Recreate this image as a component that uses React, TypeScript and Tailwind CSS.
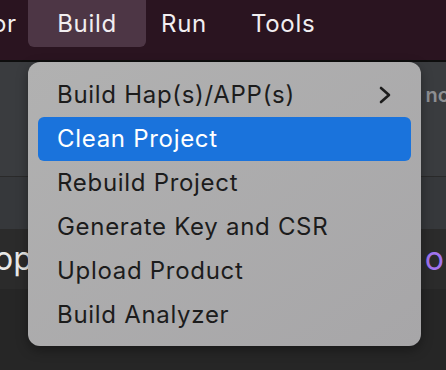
import React from 'react'

const items = [
  { label: 'Build Hap(s)/APP(s)', submenu: true },
  { label: 'Clean Project', active: true },
  { label: 'Rebuild Project' },
  { label: 'Generate Key and CSR' },
  { label: 'Upload Product' },
  { label: 'Build Analyzer' },
]

function Chevron() {
  return (
    <svg width="12" height="18" viewBox="0 0 12 18" fill="none">
      <path d="M2 2l8 7-8 7" stroke="#1c1c1c" strokeWidth="2.6" strokeLinecap="round" strokeLinejoin="round" />
    </svg>
  )
}

export default function App() {
  return (
    <div
      className="relative w-[446px] h-[370px] overflow-hidden bg-[#262626] text-[24px] tracking-[0.7px]"
      style={{ fontFamily: 'Inter, "Open Sans", "Liberation Sans", sans-serif' }}
    >
      {/* Menu bar */}
      <div className="h-[60px] bg-[#2a1420] flex items-start text-[#f1eef0]">
        <span className="h-[47px] flex items-center -ml-[8px] w-[36px]">or</span>
        <span className="h-[47px] w-[118px] flex items-center justify-center rounded-b-[6px] bg-[#4d3645]">Build</span>
        <span className="h-[47px] flex items-center ml-[15px]">Run</span>
        <span className="h-[47px] flex items-center ml-[44px]">Tools</span>
      </div>
      <div className="h-[2px] bg-[#0e0e0e]" />

      {/* Background window content */}
      <div className="h-[115px] bg-[#3a3c3f] border-b border-[#2a2a2a] relative">
        <span className="absolute right-[-4px] top-[18px] text-[20px] font-semibold text-[#8e8f92] tracking-normal">no</span>
      </div>
      <div className="h-[52px] bg-[#36383b]" />
      <div className="h-[60px] bg-[#2b2b2b] flex items-center justify-between text-[32px] tracking-normal">
        <span className="text-[#e8e8e8] -ml-[6px]">op</span>
        <span className="text-[#a274ef] mr-[2px]">o</span>
      </div>

      {/* Dropdown */}
      <div className="absolute left-[28px] top-[62px] w-[393px] h-[284px] rounded-[12px] bg-gradient-to-br from-[#b1b1b1] to-[#a7a6a8] px-[10px] pt-[11px] shadow-[0_4px_12px_rgba(0,0,0,0.35)]">
        {items.map((item) => (
          <div
            key={item.label}
            className={
              'h-[44px] flex items-center justify-between pl-[19px] pr-[20px] rounded-[6px] ' +
              (item.active ? 'bg-[#1a73dc] text-white' : 'text-[#1c1c1c]')
            }
          >
            <span>{item.label}</span>
            {item.submenu && <Chevron />}
          </div>
        ))}
      </div>
    </div>
  )
}
